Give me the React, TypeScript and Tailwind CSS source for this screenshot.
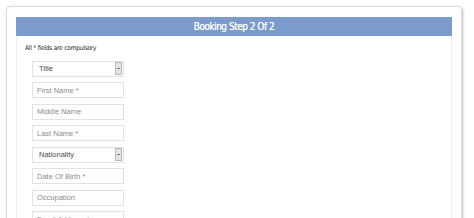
import React from 'react';

const fields = [
  { label: 'Title', select: true },
  { label: 'First Name *' },
  { label: 'Middle Name' },
  { label: 'Last Name *' },
  { label: 'Nationality', select: true },
  { label: 'Date Of Birth *' },
  { label: 'Occupation' },
  { label: 'Email Address *' },
];

function SelectBox({ label }: { label: string }) {
  return (
    <div className="flex h-[16px] w-[92px] items-center border border-[#e2e2e2] bg-white pl-[6px] pr-[1px]">
      <span className="flex-1 text-[7.5px] text-[#4a4a4a]">{label}</span>
      <span className="flex h-[13px] w-[7px] items-center justify-center border border-[#b8b8b8] bg-[#e4e4e4]">
        <span className="h-px w-[3px] bg-[#777]" />
      </span>
    </div>
  );
}

function InputBox({ label }: { label: string }) {
  return (
    <div className="flex h-[16px] w-[92px] items-center border border-[#e2e2e2] bg-white pl-[4px]">
      <span className="text-[7.5px] text-[#8c8c8c]">{label}</span>
    </div>
  );
}

export default function App() {
  return (
    <div className="h-[218px] w-[474px] overflow-hidden bg-white pl-[6px] pt-[6px] font-['Liberation_Sans',sans-serif]">
      <div className="h-[240px] w-[456px] rounded-[4px] border border-[#dcdcdc] px-[9px] pt-[10px] shadow-[1px_1px_3px_rgba(0,0,0,0.25)]">
        <div className="h-full border-x border-[#efefef]">
          <div className="-mx-px flex h-[19px] items-center justify-center bg-[#7b9bcc] font-['DejaVu_Sans',sans-serif] text-[10px] tracking-[-0.5px] text-white font-stretch-condensed [text-shadow:0_0_0.5px_#fff]">
            Booking Step 2 Of 2
          </div>
          <div className="pl-[8px] pt-[8px] font-['DejaVu_Sans',sans-serif] text-[6.5px] tracking-[-0.2px] text-[#222] font-stretch-condensed">
            All * fields are compulsory
          </div>
          <div className="flex flex-col gap-[5.5px] pl-[15px] pt-[7px]">
            {fields.map((f) =>
              f.select ? <SelectBox key={f.label} label={f.label} /> : <InputBox key={f.label} label={f.label} />
            )}
          </div>
        </div>
      </div>
    </div>
  );
}
